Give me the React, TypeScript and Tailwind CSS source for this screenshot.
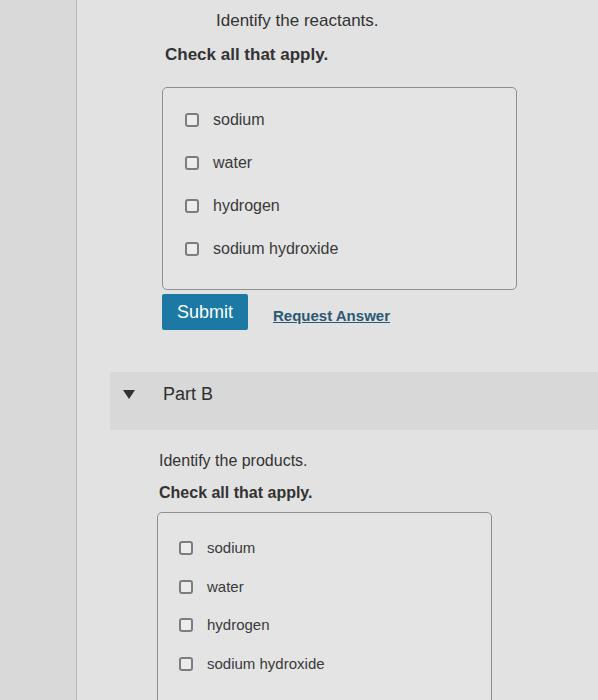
import React from 'react';

const reactants = ['sodium', 'water', 'hydrogen', 'sodium hydroxide'];
const products = ['sodium', 'water', 'hydrogen', 'sodium hydroxide'];

function Option({ label, gap, size }: { label: string; gap: string; size: string }) {
  return (
    <label className={`flex items-center ${gap}`}>
      <span className="w-[14px] h-[14px] rounded-[3px] border-2 border-[#7d7d7d] bg-[#ececec] shrink-0" />
      <span className={`${size} text-[#3a3a3a]`}>{label}</span>
    </label>
  );
}

export default function App() {
  return (
    <div
      className="flex h-[700px] w-[598px] overflow-hidden bg-[#e2e2e2]"
      style={{ fontFamily: '"Liberation Sans", Arial, sans-serif' }}
    >
      {/* left gutter */}
      <div className="w-[77px] shrink-0 bg-[#d9d9d9] border-r border-[#b9b9b9]" />

      <main className="flex-1">
        {/* --- Part A --- */}
        <section className="pl-[85px]">
          <p className="pt-[9px] pl-[54px] text-[17px] leading-6 text-[#333]">Identify the reactants.</p>
          <p className="mt-[10px] pl-[3px] text-[17px] leading-6 font-bold text-[#333]">Check all that apply.</p>
          <div className="mt-[20px] w-[355px] h-[203px] rounded-[5px] border border-[#8f8f8f] bg-[#e4e4e4] pt-[20px] pl-[22px] flex flex-col gap-[19px]">
            {reactants.map((r) => (
              <Option key={r} label={r} gap="gap-[14px]" size="text-[16px]" />
            ))}
          </div>
          <div className="mt-[4px] flex items-center gap-[25px]">
            <button className="h-[36px] w-[86px] rounded-[2px] bg-[#1b79a3] text-white text-[18px]">Submit</button>
            <a className="mt-[8px] text-[15px] font-bold text-[#2c5874] underline">Request Answer</a>
          </div>
        </section>

        {/* --- Part B header --- */}
        <div className="mt-[42px] ml-[33px] h-[58px] pb-[14px] bg-[#d8d8d8] flex items-center">
          <svg width="12" height="9" viewBox="0 0 12 9" className="ml-[13px]">
            <polygon points="0,0 12,0 6,9" fill="#333" />
          </svg>
          <span className="ml-[28px] text-[18px] text-[#2e2e2e]">Part B</span>
        </div>

        {/* --- Part B --- */}
        <section className="pl-[80px]">
          <p className="mt-[19px] pl-[2px] text-[16px] leading-6 text-[#333]">Identify the products.</p>
          <p className="mt-[8px] pl-[2px] text-[16px] leading-6 font-bold text-[#333]">Check all that apply.</p>
          <div className="mt-[7px] w-[335px] h-[220px] rounded-[5px] border border-[#8f8f8f] bg-[#e4e4e4] pt-[24px] pl-[21px] flex flex-col gap-[16px]">
            {products.map((p) => (
              <Option key={p} label={p} gap="gap-[14px]" size="text-[15px]" />
            ))}
          </div>
        </section>
      </main>
    </div>
  );
}
